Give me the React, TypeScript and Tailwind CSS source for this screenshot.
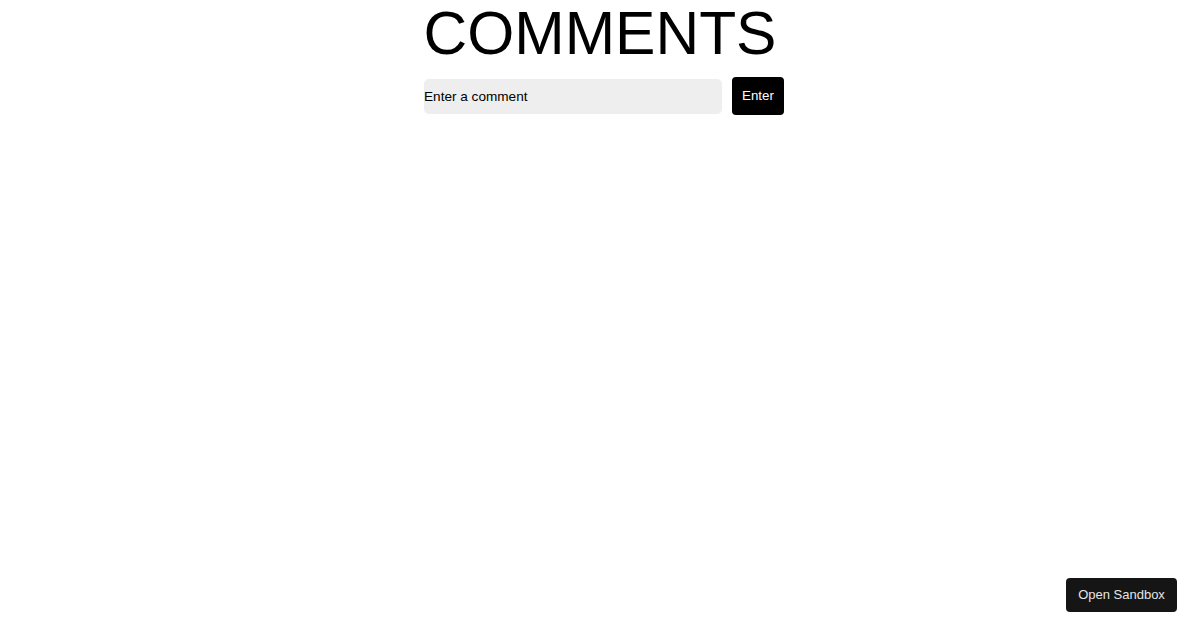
import React from "react";

export default function App() {
  return (
    <div className="relative w-[1200px] h-[630px] bg-white overflow-hidden font-['Liberation_Sans',Arial,sans-serif]">
      <div className="flex flex-col items-center">
        <h1 className="text-[60.5px] leading-[67px] font-normal text-black m-0">COMMENTS</h1>
        <div className="mt-[10px] flex items-center pl-[8px]">
          <input
            className="w-[298px] h-[35px] bg-[#eeeeee] rounded-[5px] text-[13.6px] text-black placeholder:text-black outline-none p-0 font-['Liberation_Sans',Arial,sans-serif]"
            placeholder="Enter a comment"
          />
          <button className="ml-[10px] w-[52px] h-[38px] bg-black text-white rounded-[4px] text-[13.33px] font-['Liberation_Sans',Arial,sans-serif]">
            Enter
          </button>
        </div>
      </div>
      <div className="absolute right-[23px] bottom-[18px] w-[111px] h-[34px] bg-[#151515] rounded-[4px] flex items-center justify-center text-[13px] text-[#e5e5e5]">
        Open Sandbox
      </div>
    </div>
  );
}
